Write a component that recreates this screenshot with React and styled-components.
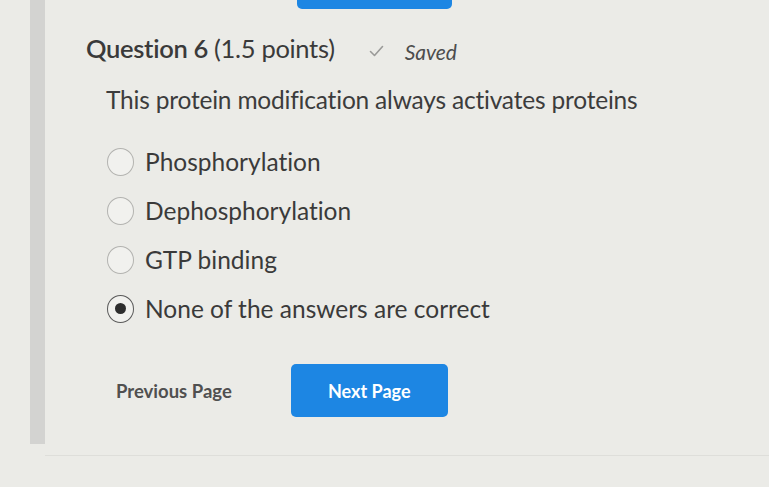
import React, { useState } from "react";
import styled, { createGlobalStyle } from "styled-components";

const GlobalStyle = createGlobalStyle`
  html, body {
    margin: 0;
    padding: 0;
    background: #ebebe7;
    font-family: Lato, "Open Sans", sans-serif;
    font-variant-ligatures: none;
    overflow: hidden;
  }
`;

const Page = styled.div`
  display: flex;
  width: 769px;
  height: 487px;
  padding-left: 30px;
  box-sizing: border-box;
`;

const Rail = styled.div`
  width: 15px;
  height: 444px;
  background: #d3d3d1;
  flex-shrink: 0;
`;

const Main = styled.div`
  display: flex;
  flex-direction: column;
  padding-left: 41px;
  flex: 1;
  height: 455px;
  border-bottom: 1px solid #dededa;
`;

const TopButton = styled.div`
  margin-left: 211px;
  width: 155px;
  height: 9px;
  background: #1d86e3;
  border-radius: 0 0 5px 5px;
`;

const Header = styled.div`
  display: flex;
  align-items: center;
  margin-top: 24px;
  height: 30px;
`;

const Title = styled.h2`
  margin: 0;
  font-size: 25.5px;
  font-weight: 600;
  color: #3a3a3a;
  letter-spacing: -0.3px;
`;

const Points = styled.span`
  font-weight: 400;
  margin-left: 6px;
`;

const SavedTag = styled.span`
  display: flex;
  align-items: center;
  margin-left: 34px;
  margin-top: 6px;
  font-size: 21px;
  font-style: italic;
  color: #4d4d4d;
  gap: 21px;
`;

const Prompt = styled.p`
  margin: 22px 0 0 20px;
  height: 30px;
  line-height: 30px;
  font-size: 24.5px;
  color: #3c3c3c;
  letter-spacing: -0.2px;
`;

const Options = styled.div`
  display: flex;
  flex-direction: column;
  margin: 22px 0 0 21px;
`;

const Option = styled.label`
  display: flex;
  align-items: center;
  height: 49px;
  gap: 11px;
  font-size: 24.5px;
  color: #3a3a3a;
  cursor: pointer;
`;

const Radio = styled.span`
  box-sizing: border-box;
  width: 27px;
  height: 28px;
  border-radius: 50%;
  border: 1.5px solid ${(p) => (p.$checked ? "#5a5a5a" : "#b3b3b0")};
  background: #f1f1ee;
  display: flex;
  align-items: center;
  justify-content: center;
  flex-shrink: 0;

  &::after {
    content: "";
    width: 11px;
    height: 11px;
    border-radius: 50%;
    background: #2e2e2e;
    display: ${(p) => (p.$checked ? "block" : "none")};
  }
`;

const Nav = styled.div`
  display: flex;
  align-items: center;
  margin: 31px 0 0 30px;
`;

const PrevLink = styled.button`
  border: none;
  background: none;
  padding: 0;
  font-family: inherit;
  font-size: 18.5px;
  font-weight: 700;
  color: #505050;
  cursor: pointer;
`;

const NextButton = styled.button`
  margin-left: 59px;
  width: 157px;
  height: 53px;
  border: none;
  border-radius: 5px;
  background: #1d86e3;
  color: #ffffff;
  font-family: inherit;
  font-size: 18px;
  font-weight: 700;
  cursor: pointer;
`;

const answers = [
  "Phosphorylation",
  "Dephosphorylation",
  "GTP binding",
  "None of the answers are correct",
];

function Check() {
  return (
    <svg width="15" height="12" viewBox="0 0 15 12" fill="none">
      <path d="M1.5 6.5 L5.5 10.5 L13.5 1.5" stroke="#9a9a98" strokeWidth="1.6" strokeLinecap="round" strokeLinejoin="round" />
    </svg>
  );
}

export default function App() {
  const [picked, setPicked] = useState(3);

  return (
    <>
      <GlobalStyle />
      <Page>
        <Rail />
        <Main>
          <TopButton />
          <Header>
            <Title>
              Question 6<Points>(1.5 points)</Points>
            </Title>
            <SavedTag>
              <Check />
              Saved
            </SavedTag>
          </Header>
          <Prompt>This protein modification always activates proteins</Prompt>
          <Options>
            {answers.map((a, i) => (
              <Option key={a} onClick={() => setPicked(i)}>
                <Radio $checked={picked === i} />
                {a}
              </Option>
            ))}
          </Options>
          <Nav>
            <PrevLink>Previous Page</PrevLink>
            <NextButton>Next Page</NextButton>
          </Nav>
        </Main>
      </Page>
    </>
  );
}
